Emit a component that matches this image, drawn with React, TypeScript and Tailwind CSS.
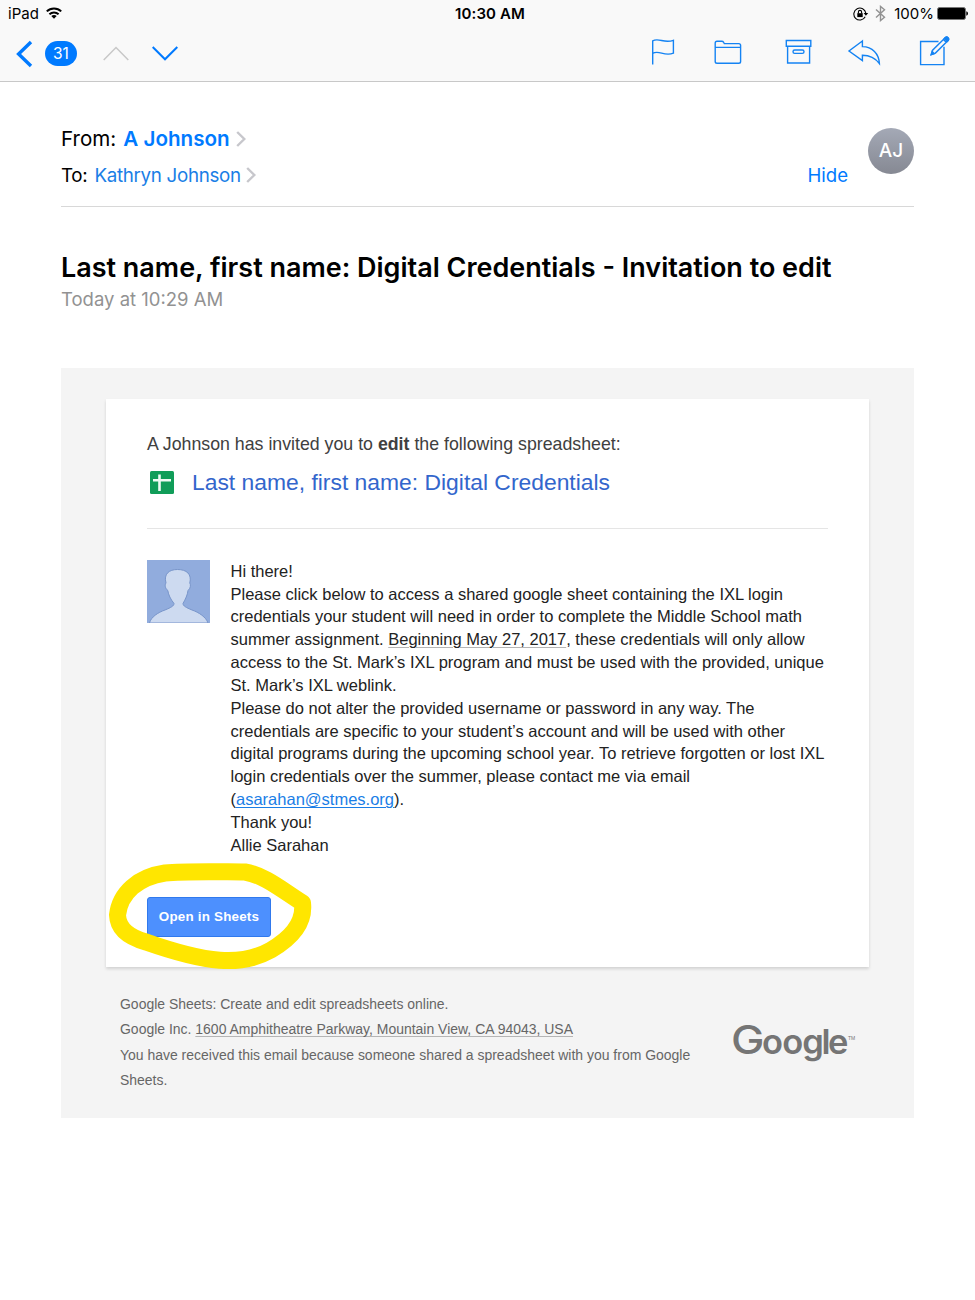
import type { ReactNode } from 'react';

const messageLines: ReactNode[] = [
  'Hi there!',
  'Please click below to access a shared google sheet containing the IXL login',
  'credentials your student will need in order to complete the Middle School math',
  <>
    summer assignment. <Detected>Beginning May 27, 2017</Detected>, these credentials will only allow
  </>,
  'access to the St. Mark’s IXL program and must be used with the provided, unique',
  'St. Mark’s IXL weblink.',
  'Please do not alter the provided username or password in any way. The',
  'credentials are specific to your student’s account and will be used with other',
  'digital programs during the upcoming school year. To retrieve forgotten or lost IXL',
  'login credentials over the summer, please contact me via email',
  <>
    (<a href="#" className="text-[#1a7ee6] underline decoration-1 underline-offset-2">asarahan@stmes.org</a>).
  </>,
  'Thank you!',
  'Allie Sarahan',
];

export default function App() {
  return (
    <div className="h-[1300px] w-[975px] overflow-hidden bg-white font-['Inter',sans-serif] text-black">
      <header className="h-[82px] border-b border-[#c8c8c8] bg-[#f9f9f9]">
        <StatusBar />
        <Toolbar />
      </header>
      <main className="px-[61px]">
        <MessageHeader />
        <h1 className="mt-[43px] h-[36px] text-[26.97px] leading-[36px] font-semibold whitespace-nowrap">
          Last name, first name: Digital Credentials - Invitation to edit
        </h1>
        <p className="h-[27px] text-[18.5px] leading-[26px] text-[#929292]">Today at 10:29 AM</p>
        <SharedSheet />
      </main>
    </div>
  );
}

function StatusBar() {
  return (
    <div className="grid h-[27px] grid-cols-3 items-center pr-[7px] pl-2 text-[15px]">
      <div className="flex items-center gap-[7px]">
        <span className="pt-px">iPad</span>
        <svg className="-mt-px" width="16" height="12" viewBox="0 0 16 12" fill="none" stroke="black" strokeWidth="2">
          <path d="M.8 4.4C4.8.4 11.2.4 15.2 4.4M3.4 7.2C6 4.8 10 4.8 12.6 7.2" />
          <path d="M5.3 9.1C6.8 7.7 9.2 7.7 10.7 9.1L8 11.8Z" fill="black" stroke="none" />
        </svg>
      </div>
      <span className="pt-px pl-[4px] text-center font-semibold tracking-[0.1px]">10:30 AM</span>
      <div className="flex items-center justify-end">
        <svg width="16" height="14" viewBox="0 0 16 14" fill="none" stroke="black" strokeWidth="1.1">
          <path d="M12.2 9.8A6 6 0 1 1 12.8 6.2" />
          <path d="M10.6 6H15.2L12.9 8.8Z" fill="black" stroke="none" />
          <rect x="4.3" y="6.2" width="5.4" height="3.9" fill="black" stroke="none" />
          <path d="M5.4 6.4V5A1.6 1.6 0 0 1 8.6 5V6.4" />
        </svg>
        <svg className="mr-[8px] ml-[6px]" width="11" height="17" viewBox="0 0 11 17" fill="none" stroke="#929292" strokeWidth="1.4">
          <path d="M1 4.5L9.5 12.3L5.5 15.6V1.4L9.5 4.7L1 12.5" />
        </svg>
        <span className="pt-px">100%</span>
        <svg className="ml-[3px]" width="31" height="13" viewBox="0 0 31 13">
          <rect x=".5" y=".5" width="28" height="12" rx="2" fill="black" stroke="#777" />
          <path d="M29.3 4.2Q31 4.5 31 6.5T29.3 8.8Z" fill="black" />
        </svg>
      </div>
    </div>
  );
}

function Toolbar() {
  return (
    <div className="flex h-[54px] items-center justify-between pr-[25px] pl-4">
      <div className="-mt-px flex items-center">
        <svg width="17" height="28" viewBox="0 0 17 28" fill="none" stroke="#007aff" strokeWidth="3.4">
          <path d="M15 2L2.6 14L15 26" />
        </svg>
        <span className="ml-[12px] flex h-[25px] w-[32px] items-center justify-center rounded-full bg-[#007aff] pt-px text-[15.5px] text-white">
          31
        </span>
        <svg className="ml-[26px]" width="26" height="15" viewBox="0 0 26 15" fill="none" stroke="#c8c8c8" strokeWidth="1.5">
          <path d="M.7 14L13 1.5L25.3 14" />
        </svg>
        <svg className="ml-[23px]" width="26" height="15" viewBox="0 0 26 15" fill="none" stroke="#007aff" strokeWidth="2">
          <path d="M.7 1L13 13.3L25.3 1" />
        </svg>
      </div>
      <svg width="300" height="40" viewBox="650 34 300 40" fill="none" stroke="#1483f3" strokeWidth="1.4">
        {/* flag */}
        <path d="M652.7 64.5V40.8C659 37.5 664 43.7 673.4 40.3V53.2C664 56.8 659 49.6 652.7 53.4" />
        {/* folder */}
        <path d="M715.2 47.4H740.6M717 41.3H721.6Q723.1 41.3 723.6 42.3L724.3 43.6H738.8Q740.6 43.6 740.6 45.4V61.4Q740.6 63.2 738.8 63.2H717Q715.2 63.2 715.2 61.4V43.1Q715.2 41.3 717 41.3Z" />
        {/* archive */}
        <path d="M786.3 40.5H810.8V46.2H786.3ZM787.6 46.2V63H809.6V46.2" />
        <rect x="793" y="50" width="11" height="3.4" rx="1.7" />
        {/* reply */}
        <path d="M862.4 41L849 51L862.4 60.6V55.3C870.5 55.3 875 57.7 879.4 63.6C879 53.5 872.3 46.8 862.4 46.6Z" />
        {/* compose */}
        <path d="M938.5 41.5H920.6V64.6H944V46.7" />
        <path d="M931.2 54.6L932.6 50.2L945.4 37.5Q946.8 36.5 948 37.7T948.3 40.3L935.4 53.1ZM943.4 39.4L946.3 42.3" />
        <path d="M944.3 38.5L945.6 37.3Q946.8 36.5 948 37.7T948.3 40.3L947.2 41.4ZM931.2 54.6L932.2 51.4L934.1 53.7Z" fill="#1483f3" />
      </svg>
    </div>
  );
}

function Chevron() {
  return (
    <svg width="10" height="16" viewBox="0 0 10 16" fill="none" stroke="#c7c7cc" strokeWidth="2.4">
      <path d="M1.2 1L8.3 8L1.2 15" />
    </svg>
  );
}

function MessageHeader() {
  return (
    <section className="flex h-[125px] items-start border-b border-[#d8d8d8] pt-[39px]">
      <div className="flex-1">
        <div className="flex h-[36px] items-center text-[20.6px]">
          <span>From:</span>
          <span className="mr-[6px] ml-[7px] font-semibold text-[#007aff]">A Johnson</span>
          <Chevron />
        </div>
        <div className="flex h-[36px] items-center text-[18.8px]">
          <span className="pt-[2px] tracking-[-0.3px]">To:</span>
          <span className="mr-[5.5px] ml-[7px] pt-[2px] tracking-[-0.32px] text-[#1a7ee6]">Kathryn Johnson</span>
          <Chevron />
        </div>
      </div>
      <span className="mt-[36px] mr-[20px] text-[18.6px] leading-[36px] text-[#007aff]">Hide</span>
      <div className="mt-[7px] flex size-[46px] items-center justify-center rounded-full bg-linear-to-b from-[#a4a9b6] to-[#868993] text-[19px] font-medium text-white">
        AJ
      </div>
    </section>
  );
}

function Detected({ children }: { children: ReactNode }) {
  return <span className="underline decoration-[#b5b5b5] decoration-1 underline-offset-2">{children}</span>;
}

function SharedSheet() {
  return (
    <section className="mt-[55px] h-[750px] bg-[#f4f4f4] px-[45px] pt-[31px] font-['Liberation_Sans',Arial,sans-serif]">
      <article className="h-[568px] bg-white px-[41px] pt-[31px] shadow-[0_2px_3px_rgba(0,0,0,0.14)]">
        <p className="text-[17.75px] leading-[28px] whitespace-nowrap text-[#404040]">
          A Johnson has invited you to <b>edit</b> the following spreadsheet:
        </p>
        <div className="flex h-[71px] items-start border-b border-[#e5e5e5] pt-[9px] pl-[3px]">
          <svg className="mt-[4px]" width="24" height="23" viewBox="0 0 24 23">
            <rect width="24" height="23" rx="1.5" fill="#109d59" />
            <path d="M3 9.2H21M9.5 3.5V20" stroke="#effaf4" strokeWidth="2.6" />
          </svg>
          <a href="#" className="ml-[18px] text-[22.86px] leading-[30px] whitespace-nowrap text-[#3366cc]">
            Last name, first name: Digital Credentials
          </a>
        </div>
        <div className="mt-[31px] flex gap-[20.5px]">
          <Avatar />
          <div className="-mt-[0.3px] text-[16.5px] leading-[22.85px] whitespace-nowrap text-[#222]">
            {messageLines.map((line, i) => (
              <div key={i}>{line}</div>
            ))}
          </div>
        </div>
        <div className="relative mt-[40.2px] w-[124px]">
          <button className="h-[40px] w-[124px] rounded-[3px] border border-[#3079ed] bg-[#4d90fe] pt-px text-[13.4px] font-bold tracking-[0.2px] whitespace-nowrap text-white">
            Open in Sheets
          </button>
          <HighlightRing />
        </div>
      </article>
      <Footer />
    </section>
  );
}

function Avatar() {
  return (
    <svg className="shrink-0" width="63" height="63" viewBox="0 0 63 63">
      <rect width="63" height="63" fill="#91acdd" />
      <path
        d="M2.5 63C4 57 11 52.5 18 50C24 47.5 27 46 27 43.5C23.5 39 21.5 35 20.8 30.5C18.2 28.5 17.5 25 19 23C16.5 14 22 9.5 30.5 9.5C39.5 9.5 45 14 42.8 23C44 25 43.5 28.5 41 30.5C40.5 35 38.5 39 36 43.5C36 46 39 47.5 45 50C52 52.5 59 57 61 63Z"
        fill="#cddaf0"
        stroke="#7895ca"
        strokeWidth="1"
      />
    </svg>
  );
}

function HighlightRing() {
  return (
    <svg className="pointer-events-none absolute -top-[37px] -left-[41px]" width="210" height="112" viewBox="106 860 210 112" fill="none">
      <path
        d="M165 873C186 871 214 871.8 245 872C264 875 282 890 302.5 903C304.5 920 295 936 271 950C241 967 206 963 146 942C128 937 118 928 117.5 915C120 893 138 877 165 873Z"
        stroke="#ffe600"
        strokeWidth="17"
        strokeLinejoin="round"
      />
    </svg>
  );
}

function Footer() {
  return (
    <footer className="flex items-start justify-between pt-[25px] pr-[9px] pl-[14px]">
      <div className="text-[13.97px] leading-[25.4px] whitespace-nowrap text-[#666]">
        <p>Google Sheets: Create and edit spreadsheets online.</p>
        <p>
          Google Inc. <Detected>1600 Amphitheatre Parkway, Mountain View, CA 94043, USA</Detected>
        </p>
        <p>You have received this email because someone shared a spreadsheet with you from Google</p>
        <p>Sheets.</p>
      </div>
      <svg className="mt-[22px] overflow-visible" width="128" height="54" viewBox="732 1014 128 54" fill="#757575">
        <text y="1054" fontFamily="Inter" fontSize="34.5" fontWeight="600">
          <tspan x="731" fontSize="40" fontWeight="500" textLength="33.5" lengthAdjust="spacingAndGlyphs">
            G
          </tspan>
          <tspan x="762 782.2 802.2 821.4 828">oogle</tspan>
        </text>
        <text x="848" y="1040" fontFamily="Liberation Sans" fontSize="5">
          TM
        </text>
      </svg>
    </footer>
  );
}
